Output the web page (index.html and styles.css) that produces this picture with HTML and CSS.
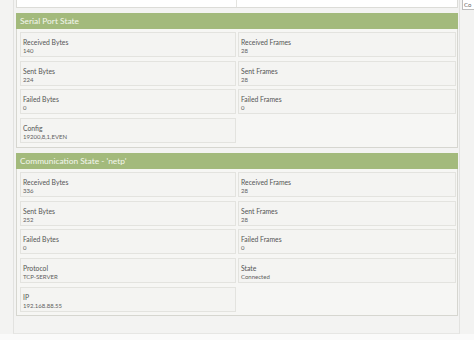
FILE: index.html
```html
<!DOCTYPE html>
<html>
<head>
<meta charset="utf-8">
<link rel="stylesheet" href="styles.css">
</head>
<body>
<div class="page">
  <div class="main">
    <div class="topcard"><div class="tc-half"></div><div class="tc-half"></div></div>

    <section class="panel">
      <div class="panel-head">Serial Port State</div>
      <div class="grid">
        <div class="cell"><div class="lbl">Received Bytes</div><div class="val">140</div></div>
        <div class="cell"><div class="lbl">Received Frames</div><div class="val">28</div></div>
        <div class="cell"><div class="lbl">Sent Bytes</div><div class="val">224</div></div>
        <div class="cell"><div class="lbl">Sent Frames</div><div class="val">28</div></div>
        <div class="cell"><div class="lbl">Failed Bytes</div><div class="val">0</div></div>
        <div class="cell"><div class="lbl">Failed Frames</div><div class="val">0</div></div>
        <div class="cell"><div class="lbl">Config</div><div class="val">19200,8,1,EVEN</div></div>
      </div>
    </section>

    <section class="panel">
      <div class="panel-head">Communication State - 'netp'</div>
      <div class="grid">
        <div class="cell"><div class="lbl">Received Bytes</div><div class="val">336</div></div>
        <div class="cell"><div class="lbl">Received Frames</div><div class="val">28</div></div>
        <div class="cell"><div class="lbl">Sent Bytes</div><div class="val">252</div></div>
        <div class="cell"><div class="lbl">Sent Frames</div><div class="val">28</div></div>
        <div class="cell"><div class="lbl">Failed Bytes</div><div class="val">0</div></div>
        <div class="cell"><div class="lbl">Failed Frames</div><div class="val">0</div></div>
        <div class="cell"><div class="lbl">Protocol</div><div class="val">TCP-SERVER</div></div>
        <div class="cell"><div class="lbl">State</div><div class="val">Connected</div></div>
        <div class="cell"><div class="lbl">IP</div><div class="val">192.168.88.55</div></div>
      </div>
    </section>
  </div>
  <div class="side"><button class="btn">Co</button></div>
</div>
<div class="footer"></div>
</body>
</html>
```

FILE: styles.css
```css
html, body {
  margin: 0;
  padding: 0;
}
body {
  background: #f3f3f2;
  font-family: Lato, "Open Sans", sans-serif;
  width: 474px;
  height: 340px;
  overflow: hidden;
}
.page {
  display: flex;
  height: 334px;
}
.main {
  margin-left: 13px;
  width: 443px;
  padding: 0 1px 0 2px;
  border-left: 1px solid #e2e2e0;
  border-right: 1px solid #e2e2e0;
  border-bottom: 1px solid #e6e6e4;
  box-sizing: content-box;
}
.topcard {
  display: grid;
  grid-template-columns: 220px 1fr;
  height: 7px;
  background: #fff;
  border: 1px solid #dcdcd8;
  border-top: none;
}
.tc-half:first-child {
  border-right: 1px solid #e4e4e0;
}
.panel {
  margin-top: 5px;
  width: 440px;
  background: #f6f6f4;
  border: 1px solid #d6d6d0;
  border-top: none;
  padding-bottom: 3.5px;
}
.panel + .panel {
  margin-top: 5.5px;
}
.panel-head {
  height: 16px;
  line-height: 16px;
  background: #a3ba7c;
  color: #f4f7ee;
  font-size: 8.4px;
  padding-left: 4px;
  margin: 0 -1px;
}
.grid {
  display: grid;
  grid-template-columns: 216px 218px;
  column-gap: 2px;
  row-gap: 3.7px;
  padding: 3px 1px 0 3px;
}
.cell {
  height: 25px;
  box-sizing: border-box;
  border: 1px solid #e3e3df;
  background: #f4f4f2;
  padding: 5px 0 0 2px;
}
.lbl {
  font-size: 6.8px;
  line-height: 9px;
  color: #555555;
}
.val {
  font-size: 6px;
  line-height: 8px;
  color: #606060;
}
.side {
  padding-left: 2px;
}
.btn {
  display: block;
  width: 20px;
  height: 10px;
  margin: 0;
  padding: 0 0 0 1px;
  border: 1px solid #bdbdbd;
  border-top: none;
  background: #fff;
  font-family: Lato, sans-serif;
  font-size: 6px;
  color: #666;
  text-align: left;
  line-height: 8px;
}
.footer {
  height: 6px;
  background: #fafafa;
}
```
